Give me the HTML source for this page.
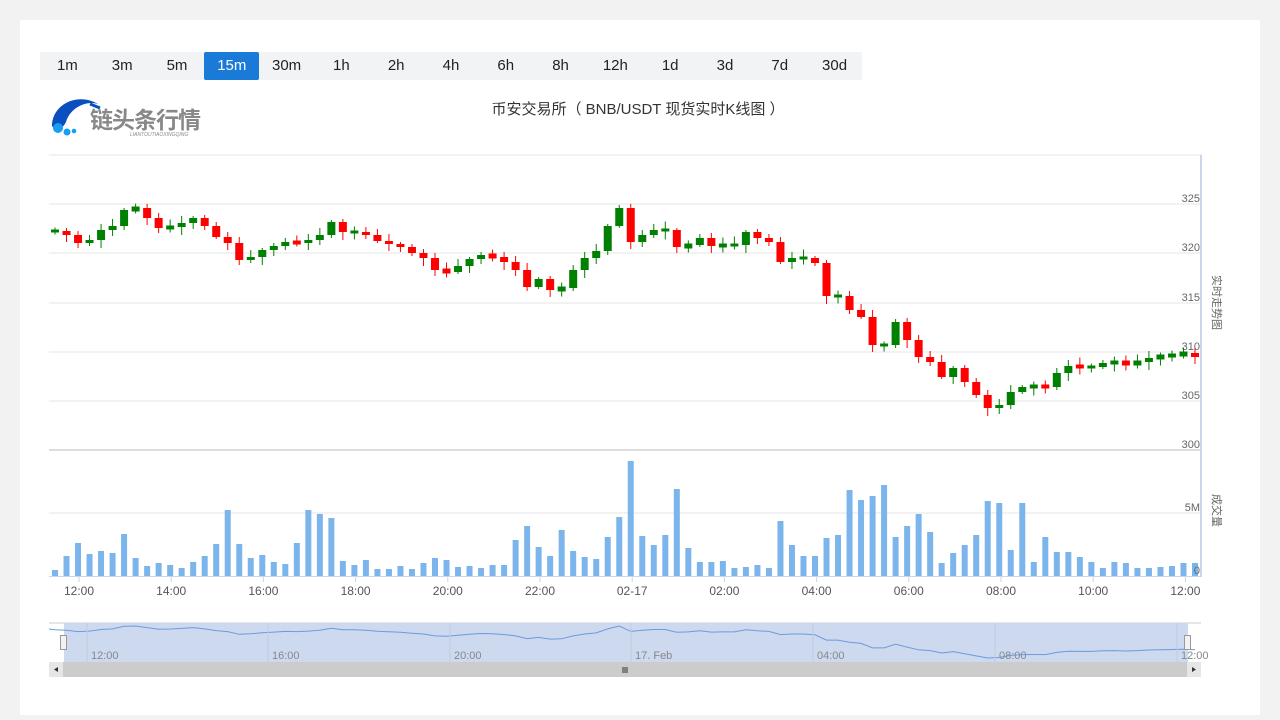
<!DOCTYPE html>
<html><head><meta charset="utf-8"><style>
body{margin:0;background:#f2f2f2;font-family:"Liberation Sans","Noto Sans CJK SC",sans-serif;}
#card{position:absolute;left:20px;top:20px;width:1240px;height:695px;background:#fff;}
#tabs{position:absolute;left:40px;top:52px;height:28px;display:flex;background:#f1f3f5;}
#tabs div{width:54.8px;text-align:center;line-height:28px;font-size:15px;color:#222;}
#tabs .on{background:#1a7ad8;color:#fff;border-radius:2px;}
</style></head><body>
<div id="card"></div>
<div id="tabs"><div>1m</div><div>3m</div><div>5m</div><div class="on">15m</div><div>30m</div><div>1h</div><div>2h</div><div>4h</div><div>6h</div><div>8h</div><div>12h</div><div>1d</div><div>3d</div><div>7d</div><div>30d</div></div>
<svg id="s" width="1280" height="720" style="position:absolute;left:0;top:0" font-family="Liberation Sans, Noto Sans CJK SC, sans-serif">
<g>
<path d="M52 126 C52 104 78 92 98 104 C86 100 70 108 66 122 C62 130 56 132 52 126Z" fill="#0a4fc0"/>
<path d="M90 104 L100 108" stroke="#0a4fc0" stroke-width="3"/>
<circle cx="58" cy="128" r="5" fill="#13a0f0"/><circle cx="67" cy="132" r="3.5" fill="#13a0f0"/><circle cx="74" cy="131" r="2.3" fill="#13a0f0"/>
<text x="90" y="128" font-size="23" font-weight="bold" fill="#888" letter-spacing="-1">链头条行情</text>
<text x="130" y="136" font-size="5" fill="#888" font-style="italic">LIANTOUTIAOXINGQING</text>
</g>
<text x="638" y="114" font-size="15" fill="#333" text-anchor="middle" xml:space="preserve">币安交易所（ BNB/USDT 现货实时K线图 ）</text>
<g id="g"></g>
</svg>
<script>
var g=document.getElementById('g'),h='';
function L(x1,y1,x2,y2,c,w){h+='<line x1="'+x1+'" y1="'+y1+'" x2="'+x2+'" y2="'+y2+'" stroke="'+c+'" stroke-width="'+(w||1)+'"/>';}
function R(x,y,w,hh,c){h+='<rect x="'+x+'" y="'+y+'" width="'+w+'" height="'+hh+'" fill="'+c+'"/>';}
function T(x,y,t,s,c,a){h+='<text x="'+x+'" y="'+y+'" font-size="'+s+'" fill="'+c+'" text-anchor="'+(a||'start')+'">'+t+'</text>';}
L(49,155,1201,155,'#e6e6e6');
[198,247,297,346,395].forEach(function(y){L(49,y+6,1201,y+6,'#e6e6e6');});
L(49,450,1201,450,'#ddd',2);
L(49,513,1201,513,'#e6e6e6');
L(1201,155,1201,577,'#ccd6eb',2);
L(49,576.5,1201,576.5,'#ccd6eb');
var yl=['325','320','315','310','305','300'];[198,247,297,346,395,444].forEach(function(y,i){T(1200,y+4,yl[i],11,'#666','end');});
T(1200,511,'5M',11,'#666','end');
h+='<text transform="translate(1213,275) rotate(90)" font-size="11" fill="#666">实时走势图</text>';
h+='<text transform="translate(1213,494) rotate(90)" font-size="11" fill="#666">成交量</text>';
var xt=['12:00','14:00','16:00','18:00','20:00','22:00','02-17','02:00','04:00','06:00','08:00','10:00','12:00'];
xt.forEach(function(t,i){var x=79+i*92.2;L(x,577,x,582,'#ccd6eb');T(x,595,t,12,'#555','middle');});
var c=[231,235,243,240,230,226,210,208,218,228,227,223,218,226,237,243,260,257,250,246,242,243,240,235,222,232,232,235,241,244,247,253,258,270,272,266,259,255,257,262,270,287,279,290,288,270,258,251,226,208,242,235,230,230,247,245,238,246,245,245,232,238,242,262,258,258,263,296,296,310,317,345,345,322,340,357,362,377,368,382,395,408,405,392,387,386,387,373,366,367,367,363,362,364,362,358,356,355,353,357];
var v=[570,556,543,554,551,553,534,558,566,563,565,568,562,556,544,510,544,558,555,562,564,543,510,514,518,561,565,560,569,569,566,569,563,558,560,567,566,568,565,565,540,526,547,556,530,551,557,559,537,517,461,536,545,535,489,548,562,562,561,568,567,565,568,521,545,556,556,538,535,490,500,496,485,537,526,514,532,563,553,545,535,501,503,550,503,562,537,552,552,557,562,568,562,563,568,568,567,566,563,563];
var sp=1140/(c.length-1),prev=231;
for(var i=0;i<c.length;i++){var x=55+i*sp,o=prev,cl=c[i];if(i==50)o=208;
var col=cl>o?'#f00':'#008000',t=Math.min(o,cl),b=Math.max(o,cl);if(b-t<3){t-=1.5;b+=1.5;}
L(x,t-((i*7)%6)-2,x,b+((i*5)%7)+2,col);R(x-4,t,8,b-t,col);
var vh=v[i]||568;R(x-3,vh,6,576-vh,'#7cb5ec');prev=cl;}
T(1200,574,'0',11,'#666','end');
R(49,623,1152,39,'#fff');L(49,623,1201,623,'#ccc');
R(64,623,1124,39,'#cdd9ef');
var p='M49 629';for(var i=0;i<c.length;i++){p+=' L'+(55+i*sp).toFixed(1)+' '+(626+(c[i]-208)/200*32).toFixed(1);}
h+='<path d="'+p+'" fill="none" stroke="#6b9be0" stroke-width="1"/>';
[87,268,450,631,813,995,1177].forEach(function(x,i){L(x,623,x,662,'#bfcbe0');T(x+4,659,['12:00','16:00','20:00','17. Feb','04:00','08:00','12:00'][i],11,'#888');});
h+='<rect x="60.5" y="635.5" width="6" height="14" fill="#f2f2f2" stroke="#999"/>';
h+='<rect x="1184.5" y="635.5" width="6" height="14" fill="#f2f2f2" stroke="#999"/>';
R(49,662,1152,15,'#ccc');R(49,662,14,15,'#e6e6e6');R(1187,662,14,15,'#e6e6e6');
h+='<path d="M58 667 L54 669.5 L58 672Z" fill="#333"/><path d="M1192 667 L1196 669.5 L1192 672Z" fill="#333"/>';
L(623,667,623,673,'#333');L(625,667,625,673,'#333');L(627,667,627,673,'#333');
g.innerHTML=h;
</script>
</body></html>
